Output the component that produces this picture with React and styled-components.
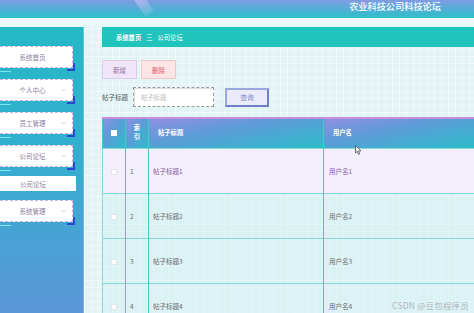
import React from "react";
import styled, { createGlobalStyle } from "styled-components";

const Global = createGlobalStyle`
  html, body { margin: 0; padding: 0; }
  body { font-family: "Noto Sans CJK SC", "Noto Sans", sans-serif; }
  * { box-sizing: border-box; }
`;

const Page = styled.div`
  position: relative;
  width: 474px;
  height: 313px;
  overflow: hidden;
  display: flex;
  flex-direction: column;
  background-color: #e2f4f6;
  background-image:
    linear-gradient(rgba(255,255,255,0.45) 1px, transparent 1px),
    linear-gradient(90deg, rgba(255,255,255,0.45) 1px, transparent 1px);
  background-size: 7px 7px;
`;

const Header = styled.header`
  position: relative;
  flex: 0 0 18px;
  display: flex;
  align-items: flex-start;
  justify-content: flex-end;
  padding-right: 33px;
  background: linear-gradient(180deg, #7f9de2 0%, #4fb0d6 55%, #2cc1c6 100%);
  overflow: hidden;
`;

const Deco = styled.div`
  position: absolute;
  left: 138px;
  top: -8px;
  width: 10px;
  height: 24px;
  background: linear-gradient(180deg, rgba(220,200,255,0.6), rgba(255,255,255,0.1));
  transform: rotate(-35deg);
`;

const Title = styled.h1`
  margin: 0;
  color: #fff;
  font-size: 9.2px;
  font-weight: 500;
  letter-spacing: 0;
  line-height: 13.5px;
`;

const Strip = styled.div`
  flex: 0 0 9px;
  background: linear-gradient(180deg, #f4fbfb 0%, #e6f6f7 100%);
`;

const Body = styled.div`
  flex: 1;
  display: flex;
  min-height: 0;
`;

const Sidebar = styled.aside`
  flex: 0 0 84px;
  display: flex;
  flex-direction: column;
  gap: 11px;
  padding-top: 19px;
  background: linear-gradient(180deg, #24b9c5 0%, #34aed0 45%, #5c97d9 100%);
  box-shadow: inset -8px 0 0 -7px rgba(255,255,255,0.25);
`;

const MenuItem = styled.div`
  position: relative;
  width: 73px;
  height: 22px;
  flex: 0 0 22px;
  background: #fff;
  border: 1px dashed #c7b3df;
  border-left: none;
  display: flex;
  align-items: center;
  justify-content: center;
  padding-right: 7px;
  color: #8c7d9e;
  font-size: 6.5px;
  &::after {
    content: "";
    position: absolute;
    right: -3px;
    bottom: -4px;
    width: 6px;
    height: 6px;
    border-right: 2px solid #2747d4;
    border-bottom: 2px solid #2747d4;
  }
  &::before {
    content: "";
    position: absolute;
    left: 0;
    bottom: -5px;
    width: 11px;
    height: 1px;
    background: #7fe6ee;
  }
`;

const Chevron = styled.svg`
  position: absolute;
  right: 6px;
  top: 8px;
  width: 5px;
  height: 4px;
`;

const SubItem = styled.div`
  width: 76px;
  height: 15px;
  flex: 0 0 15px;
  margin-top: -2px;
  margin-bottom: -2px;
  background: #fff;
  display: flex;
  align-items: center;
  justify-content: center;
  padding-right: 10px;
  color: #8c7d9e;
  font-size: 6.5px;
`;

const Main = styled.main`
  flex: 1;
  min-width: 0;
  display: flex;
  flex-direction: column;
  padding-left: 18px;
`;

const Crumbs = styled.nav`
  height: 20px;
  flex: 0 0 20px;
  background: #21c3bd;
  display: flex;
  align-items: center;
  gap: 5px;
  padding-left: 14px;
  color: #fff;
  font-size: 6.3px;
`;

const CrumbStrong = styled.span`
  font-weight: 700;
`;

const Actions = styled.div`
  display: flex;
  gap: 4px;
  margin-top: 13px;
`;

const ActionButton = styled.button`
  width: 35px;
  height: 19px;
  padding: 0;
  font-family: inherit;
  font-size: 6.5px;
  border: 1px solid ${(p) => (p.$danger ? "#f3c6c6" : "#dccbea")};
  background: ${(p) => (p.$danger ? "#fde5e5" : "#f1e6f8")};
  color: ${(p) => (p.$danger ? "#e05a6a" : "#8e6ca6")};
`;

const SearchRow = styled.div`
  display: flex;
  align-items: center;
  margin-top: 8px;
  height: 20px;
`;

const Label = styled.span`
  width: 31px;
  font-size: 6.5px;
  color: #555;
`;

const Input = styled.div`
  width: 81px;
  height: 20px;
  background: #fff;
  border: 1px dashed #9a9a9a;
  box-shadow: inset 1px 1px 0 #ddd;
  display: flex;
  align-items: center;
  padding-left: 7px;
  color: #bbb;
  font-size: 6.3px;
`;

const QueryButton = styled.button`
  margin-left: 11px;
  width: 44px;
  height: 19px;
  padding: 0;
  font-family: inherit;
  font-size: 6.8px;
  color: #7b86c8;
  background: #eaeaf8;
  border: 2px solid #9aa6dd;
  border-right-color: #6f7fcf;
  border-bottom-color: #6f7fcf;
`;

const Table = styled.table`
  margin-top: 10px;
  width: 372px;
  border-collapse: collapse;
  table-layout: fixed;
  border-top: 2px solid #c68de2;
`;

const Th = styled.th`
  height: 30px;
  padding: 0 0 0 ${(p) => p.$pad || 0}px;
  text-align: ${(p) => p.$align || "left"};
  color: #fff;
  font-size: 6.3px;
  font-weight: 700;
  line-height: 1.4;
  background: linear-gradient(to bottom right, #8f8fe0 0%, #5d9bd8 40%, #2bbdc8 100%);
  border-left: 1px solid #47c8c4;
`;

const Tr = styled.tr`
  background: ${(p) => (p.$hl ? "rgba(242,238,250,0.95)" : "rgba(214,240,243,0.55)")};
`;

const Td = styled.td`
  height: 45px;
  padding: 0 0 0 ${(p) => p.$pad || 0}px;
  text-align: ${(p) => p.$align || "left"};
  color: ${(p) => (p.$hl ? "#8a5aa2" : "#6a6a6a")};
  font-size: 6.5px;
  border-top: 1px solid #86d9d5;
  border-left: 1px solid ${(p) => (p.$strong ? "#48c8c2" : "#8fdad6")};
`;

const Box = styled.span`
  display: inline-block;
  width: 6px;
  height: 6px;
  background: #fff;
  border: 1px solid ${(p) => (p.$head ? "#fff" : "#e4e4ee")};
  vertical-align: middle;
`;

const Watermark = styled.div`
  position: absolute;
  right: 5px;
  bottom: 2px;
  font-size: 8.5px;
  color: rgba(150,150,160,0.7);
  letter-spacing: 0.2px;
`;

const Cursor = styled.svg`
  position: absolute;
  left: 355px;
  top: 145px;
  width: 7px;
  height: 10px;
`;

const menu = [
  { label: "系统首页" },
  { label: "个人中心", chev: "down" },
  { label: "员工管理", chev: "down" },
  { label: "公司论坛", chev: "up" },
];

const rows = [1, 2, 3, 4];

function Chev({ dir }) {
  return (
    <Chevron viewBox="0 0 10 6">
      <path
        d={dir === "up" ? "M1 5 L5 1 L9 5" : "M1 1 L5 5 L9 1"}
        fill="none"
        stroke="#b8a8c8"
        strokeWidth="1.2"
      />
    </Chevron>
  );
}

export default function App() {
  return (
    <>
      <Global />
      <Page>
        <Header>
          <Deco />
          <Title>农业科技公司科技论坛</Title>
        </Header>
        <Strip />
        <Body>
          <Sidebar>
            {menu.map((m) => (
              <MenuItem key={m.label}>
                {m.label}
                {m.chev && <Chev dir={m.chev} />}
              </MenuItem>
            ))}
            <SubItem>公司论坛</SubItem>
            <MenuItem>
              系统管理
              <Chev dir="down" />
            </MenuItem>
          </Sidebar>
          <Main>
            <Crumbs>
              <CrumbStrong>系统首页</CrumbStrong>
              <span>三</span>
              <span>公司论坛</span>
            </Crumbs>
            <Actions>
              <ActionButton>新增</ActionButton>
              <ActionButton $danger>删除</ActionButton>
            </Actions>
            <SearchRow>
              <Label>帖子标题</Label>
              <Input>帖子标题</Input>
              <QueryButton>查询</QueryButton>
            </SearchRow>
            <Table>
              <colgroup>
                <col style={{ width: 23 }} />
                <col style={{ width: 23 }} />
                <col style={{ width: 175 }} />
                <col />
              </colgroup>
              <thead>
                <tr>
                  <Th $align="center">
                    <Box $head />
                  </Th>
                  <Th $align="center">
                    索
                    <br />
                    引
                  </Th>
                  <Th $pad={9}>帖子标题</Th>
                  <Th $pad={9}>用户名</Th>
                </tr>
              </thead>
              <tbody>
                {rows.map((n) => (
                  <Tr key={n} $hl={n === 1}>
                    <Td $align="center">
                      <Box />
                    </Td>
                    <Td $pad={4} $strong>{n}</Td>
                    <Td $pad={4} $strong $hl={n === 1}>帖子标题{n}</Td>
                    <Td $pad={5} $strong $hl={n === 1}>用户名{n}</Td>
                  </Tr>
                ))}
              </tbody>
            </Table>
          </Main>
        </Body>
        <Cursor viewBox="0 0 7 10">
          <path d="M0.5 0.5 L0.5 8 L2.3 6.3 L3.6 9.3 L4.8 8.8 L3.5 5.9 L6 5.9 Z" fill="#fff" stroke="#333" strokeWidth="0.7" />
        </Cursor>
        <Watermark>CSDN @豆包程序员</Watermark>
      </Page>
    </>
  );
}
